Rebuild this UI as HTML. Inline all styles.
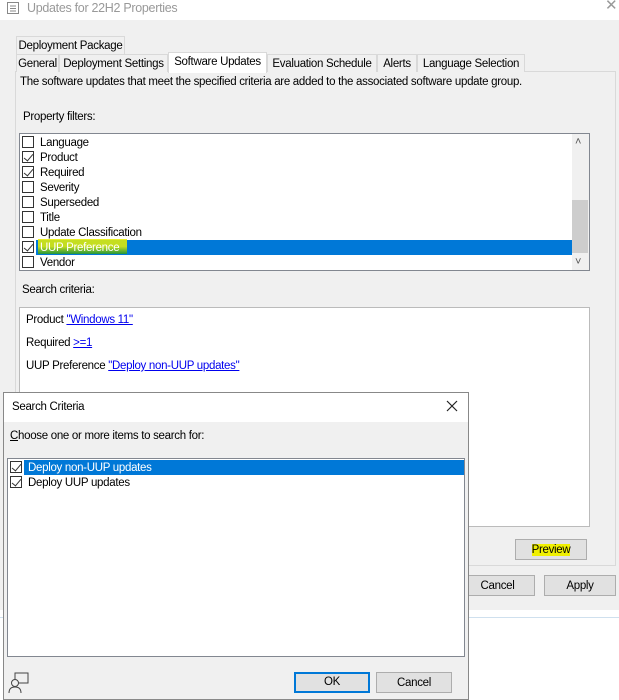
<!DOCTYPE html>
<html><head><style>
*{box-sizing:border-box;margin:0;padding:0}
body{width:619px;height:700px;background:#fff;font-family:"Liberation Sans",Arial,sans-serif;font-size:11.5px;letter-spacing:-0.3px;color:#000;position:relative;overflow:hidden;line-height:16px}
.a{position:absolute;white-space:nowrap}
.tab{position:absolute;height:18px;border:1px solid #d9d9d9;border-bottom:none;background:#f0f0f0;text-align:center;line-height:18px;white-space:nowrap;overflow:hidden}
.cb{position:absolute;width:12px;height:12px;border:1px solid #333;background:#fff}
.ck::after{content:"";position:absolute;left:3px;top:0px;width:4px;height:8px;border:solid #333;border-width:0 1px 1px 0;transform:rotate(40deg)}
.btn{position:absolute;background:#e1e1e1;border:1px solid #adadad;text-align:center;line-height:20px}
a{color:#00e;text-decoration:underline}
</style></head><body>
<div class="a" style="left:0;top:0;width:619px;height:610px;background:#f0f0f0"></div>
<div class="a" style="left:0;top:0;width:619px;height:20px;background:#fff"></div>
<div class="a" style="left:0;top:617px;width:619px;height:1px;background:#cfe0ee"></div>
<svg class="a" style="left:6px;top:1px" width="14" height="14"><rect x="1.5" y="1.5" width="11" height="11" fill="none" stroke="#888"/><path d="M4 5h6M4 7.5h6M4 10h6" stroke="#888"/></svg>
<div class="a" style="left:27px;top:0px;color:#999;font-size:12.5px">Updates for 22H2 Properties</div>
<div class="a" style="left:605px;top:-2px;color:#999;font-size:15px">✕</div>

<div class="tab" style="left:16px;top:36px;width:109px">Deployment Package</div>
<div class="a" style="left:15px;top:71px;width:601px;height:495px;border:1px solid #d9d9d9;background:#f0f0f0"></div>
<div class="tab" style="left:16px;top:54px;width:43px">General</div>
<div class="tab" style="left:59px;top:54px;width:109px">Deployment Settings</div>
<div class="tab" style="left:168px;top:52px;width:99px;height:21px;background:#fff;z-index:2">Software Updates</div>
<div class="tab" style="left:267px;top:54px;width:110px">Evaluation Schedule</div>
<div class="tab" style="left:377px;top:54px;width:40px">Alerts</div>
<div class="tab" style="left:417px;top:54px;width:108px">Language Selection</div>
<div class="a" style="left:20px;top:74px">The software updates that meet the specified criteria are added to the associated software update group.</div>
<div class="a" style="left:23px;top:109px">Property filters:</div>

<div class="a" style="left:19px;top:133px;width:571px;height:138px;border:1px solid #828790;background:#fff"></div>
<div class="a" style="left:36px;top:240px;width:536px;height:15px;background:#0078d7"></div>
<div class="a" style="left:38px;top:239px;width:89px;height:15px;background:linear-gradient(#e8f000 50%,#2a9a20 100%);opacity:.85"></div>
<div class="a" style="left:572px;top:134px;width:17px;height:136px;background:#f0f0f0"></div>
<div class="a" style="left:572px;top:200px;width:16px;height:53px;background:#cdcdcd"></div>
<div class="a" style="left:575px;top:134px;font-size:11px;color:#555">˄</div>
<div class="a" style="left:575px;top:254px;font-size:11px;color:#555">˅</div>

<div class="cb" style="left:22px;top:136px"></div><div class="a" style="left:40px;top:135px">Language</div>
<div class="cb ck" style="left:22px;top:151px"></div><div class="a" style="left:40px;top:150px">Product</div>
<div class="cb ck" style="left:22px;top:166px"></div><div class="a" style="left:40px;top:165px">Required</div>
<div class="cb" style="left:22px;top:181px"></div><div class="a" style="left:40px;top:180px">Severity</div>
<div class="cb" style="left:22px;top:196px"></div><div class="a" style="left:40px;top:195px">Superseded</div>
<div class="cb" style="left:22px;top:211px"></div><div class="a" style="left:40px;top:210px">Title</div>
<div class="cb" style="left:22px;top:226px"></div><div class="a" style="left:40px;top:225px">Update Classification</div>
<div class="cb ck" style="left:22px;top:241px"></div><div class="a" style="left:40px;top:240px;color:#fff">UUP Preference</div>
<div class="cb" style="left:22px;top:256px"></div><div class="a" style="left:40px;top:255px">Vendor</div>

<div class="a" style="left:22px;top:282px">Search criteria:</div>
<div class="a" style="left:19px;top:307px;width:571px;height:220px;border:1px solid #bbb;background:#fff"></div>
<div class="a" style="left:26px;top:312px">Product <a>"Windows 11"</a></div>
<div class="a" style="left:26px;top:335px">Required <a>&gt;=1</a></div>
<div class="a" style="left:26px;top:358px">UUP Preference <a>"Deploy non-UUP updates"</a></div>

<div class="btn" style="left:515px;top:539px;width:72px;height:21px"><span style="background:#f0f000">Preview</span></div>
<div class="btn" style="left:460px;top:575px;width:75px;height:21px">Cancel</div>
<div class="btn" style="left:544px;top:575px;width:72px;height:21px">Apply</div>

<div class="a" style="left:3px;top:392px;width:466px;height:308px;border:1px solid #888;background:#f0f0f0"></div>
<div class="a" style="left:4px;top:393px;width:464px;height:29px;background:#fff"></div>
<div class="a" style="left:12px;top:399px">Search Criteria</div>
<svg class="a" style="left:446px;top:400px" width="12" height="12"><path d="M1 1L11 11M11 1L1 11" stroke="#222" stroke-width="1.2"/></svg>
<div class="a" style="left:10px;top:428px"><u>C</u>hoose one or more items to search for:</div>
<div class="a" style="left:7px;top:458px;width:458px;height:199px;border:1px solid #828790;background:#fff"></div>
<div class="a" style="left:24px;top:460px;width:440px;height:15px;background:#0078d7"></div>
<div class="cb ck" style="left:10px;top:461px"></div><div class="a" style="left:28px;top:460px;color:#fff">Deploy non-UUP updates</div>
<div class="cb ck" style="left:10px;top:476px"></div><div class="a" style="left:28px;top:475px">Deploy UUP updates</div>
<svg class="a" style="left:8px;top:672px" width="22" height="22"><rect x="7" y="1" width="13" height="10" fill="none" stroke="#444"/><circle cx="7" cy="11" r="3.5" fill="#f0f0f0" stroke="#444"/><path d="M1 21c0-5 3-6 6-6s6 1 6 6" fill="#f0f0f0" stroke="#444"/></svg>
<div class="btn" style="left:294px;top:672px;width:76px;height:21px;border:2px solid #0078d7;line-height:17px">OK</div>
<div class="btn" style="left:376px;top:672px;width:76px;height:21px">Cancel</div>
</body></html>
